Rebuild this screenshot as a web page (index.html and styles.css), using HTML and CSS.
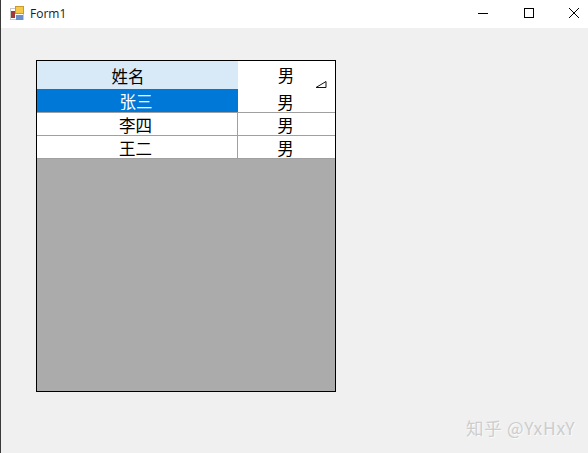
FILE: index.html
```html
<!DOCTYPE html>
<html lang="zh-CN">
<head>
  <meta charset="UTF-8" />
  <title>Form1</title>
  <link rel="stylesheet" href="styles.css">
</head>
<body>
  <div class="window">
    <div class="titlebar">
      <svg class="app-icon" width="15" height="15" viewBox="0 0 15 15">
        <rect x="0.5" y="2.5" width="13" height="11" fill="#fff" stroke="#c8c8c8"/>
        <rect x="1" y="5" width="4" height="7" fill="#a33a32"/>
        <rect x="5.5" y="0.5" width="8" height="7" fill="#f5c945" stroke="#c99a2c"/>
        <rect x="6" y="9" width="7" height="5" fill="#6a8fc8"/>
      </svg>
      <span class="title">Form1</span>
      <div class="controls">
        <div class="control">
          <svg width="10" height="10" viewBox="0 0 10 10"><path d="M0 5.5H10" stroke="#000"/></svg>
        </div>
        <div class="control">
          <svg width="10" height="10" viewBox="0 0 10 10"><rect x="0.5" y="0.5" width="9" height="9" fill="none" stroke="#000"/></svg>
        </div>
        <div class="control">
          <svg width="10" height="10" viewBox="0 0 10 10"><path d="M0 0L10 10M10 0L0 10" stroke="#000" fill="none"/></svg>
        </div>
      </div>
    </div>

    <div class="client">
      <div class="grid-view">
        <div class="row row-head">
          <div class="cell name head-name">姓名</div>
          <div class="cell sex head-sex">男
            <svg class="sort-glyph" width="12" height="8" viewBox="0 0 12 8"><path d="M1 7.5H11V1.5Z" fill="none" stroke="#111"/></svg>
          </div>
        </div>
        <div class="row row-selected">
          <div class="cell name selected">张三</div>
          <div class="cell sex">男</div>
        </div>
        <div class="row">
          <div class="cell name">李四</div>
          <div class="cell sex">男</div>
        </div>
        <div class="row">
          <div class="cell name">王二</div>
          <div class="cell sex">男</div>
        </div>
      </div>
    </div>
  </div>

  <div class="watermark">知乎 @YxHxY</div>
</body>
</html>
```

FILE: styles.css
```css
html, body {
  margin: 0;
  height: 100%;
  overflow: hidden;
}

body {
  font-family: "Noto Sans CJK SC", "Liberation Sans", sans-serif;
  background-color: #f0f0f0;
  color: #000;
}

.window {
  height: 453px;
  display: flex;
  flex-direction: column;
  border-left: 1px solid #3a3a3a;
  box-sizing: border-box;
}

.titlebar {
  height: 28px;
  flex: none;
  display: flex;
  align-items: center;
  background-color: #fff;
  padding-left: 9px;
}

.app-icon {
  margin-top: -2px;
}

.title {
  font-family: "Open Sans", "Liberation Sans", sans-serif;
  font-size: 12px;
  margin-left: 5px;
  margin-top: -1px;
  color: #1a1a1a;
}

.controls {
  margin-left: auto;
  margin-right: -9px;
  display: flex;
  margin-top: -2px;
}

.control {
  width: 45.5px;
  height: 28px;
  display: flex;
  align-items: center;
  justify-content: center;
}

.client {
  flex: 1;
  padding: 32px 0 0 35px;
  background-color: #f0f0f0;
}

.grid-view {
  width: 298px;
  height: 330px;
  border: 1px solid #000;
  background-color: #ababab;
}

.row {
  display: flex;
  height: 23px;
  font-size: 16.5px;
}

.row-head {
  height: 28px;
}

.row-selected {
  height: 24px;
}

.cell {
  display: flex;
  align-items: center;
  justify-content: center;
  background-color: #fff;
  box-sizing: border-box;
  padding-top: 2px;
  border-bottom: 1px solid #a0a0a0;
  line-height: 1;
}

.name {
  width: 201px;
  padding-right: 3px;
  border-right: 1px solid #a0a0a0;
}

.sex {
  width: 97px;
  padding-right: 2px;
}

.head-name {
  background-color: #d8e9f8;
  border: 0;
  padding-right: 19px;
}

.head-sex {
  border: 0;
  position: relative;
  padding-right: 1px;
  padding-top: 0;
}

.sort-glyph {
  position: absolute;
  right: 8px;
  bottom: 1px;
}

.selected {
  background-color: #0078d7;
  color: #fff;
  border-right: 0;
}

.row-selected .sex {
  padding-top: 3px;
}

.watermark {
  position: absolute;
  left: 466px;
  top: 416px;
  font-size: 17.5px;
  letter-spacing: 0.7px;
  line-height: 24px;
  color: #cdcdcd;
  text-shadow: 1px 1px 0 #fafafa;
  white-space: nowrap;
}
```
